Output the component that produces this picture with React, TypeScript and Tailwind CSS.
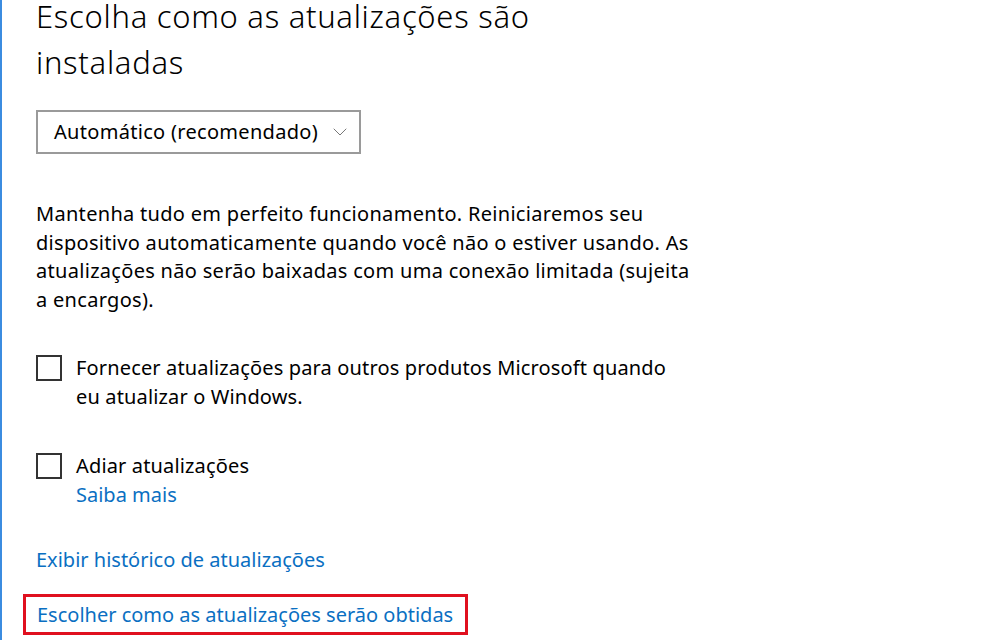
import { ChevronDown } from 'lucide-react';

function Checkbox({ children }: { children: React.ReactNode }) {
  return (
    <label className="flex items-start gap-[14px]">
      <span className="mt-[1px] block h-[26px] w-[26px] shrink-0 border-2 border-[#333]" />
      <span className="block">{children}</span>
    </label>
  );
}

export default function App() {
  return (
    <div
      className="h-[640px] w-[1000px] overflow-hidden border-l-2 border-[#3b8ce0] bg-white pl-[34px] text-[20px] leading-[28.5px] tracking-[0.3px] text-black"
      style={{ fontFamily: '"Noto Sans", "Open Sans", sans-serif' }}
    >
      {/* Heading */}
      <h1 className="-mt-[7px] w-[540px] text-[31px] font-light leading-[46px] tracking-[0.7px]">
        Escolha como as atualizações são instaladas
      </h1>

      {/* Dropdown */}
      <button className="mt-[25px] flex h-[44px] w-[325px] items-center justify-between border-2 border-[#9a9a9a] pl-[16px] pr-[7px] tracking-[0.3px]">
        <span>Automático (recomendado)</span>
        <ChevronDown className="h-[24px] w-[24px] text-[#777]" strokeWidth={1} />
      </button>

      {/* Description */}
      <p className="mt-[46px] w-[662px]">
        Mantenha tudo em perfeito funcionamento. Reiniciaremos seu dispositivo automaticamente quando
        você não o estiver usando. As atualizações não serão baixadas com uma conexão limitada
        (sujeita a encargos).
      </p>

      {/* Options */}
      <div className="mt-[40px] w-[632px] tracking-[0.15px]">
        <Checkbox>
          Fornecer atualizações para outros produtos Microsoft quando eu atualizar o Windows.
        </Checkbox>
      </div>

      <div className="mt-[41px] tracking-[0.15px]">
        <Checkbox>
          Adiar atualizações
          <a className="block tracking-normal text-[#0a6fc2]">Saiba mais</a>
        </Checkbox>
      </div>

      {/* Links */}
      <a className="mt-[37px] block whitespace-nowrap tracking-normal text-[#0a6fc2]">
        Exibir histórico de atualizações
      </a>

      <div className="mt-[19px] -ml-[13px] w-[445px] border-[3px] border-[#e0101f] pl-[11px] pt-[4px] pb-[3px]">
        <a className="block whitespace-nowrap tracking-normal text-[#0a6fc2]">
          Escolher como as atualizações serão obtidas
        </a>
      </div>
    </div>
  );
}
